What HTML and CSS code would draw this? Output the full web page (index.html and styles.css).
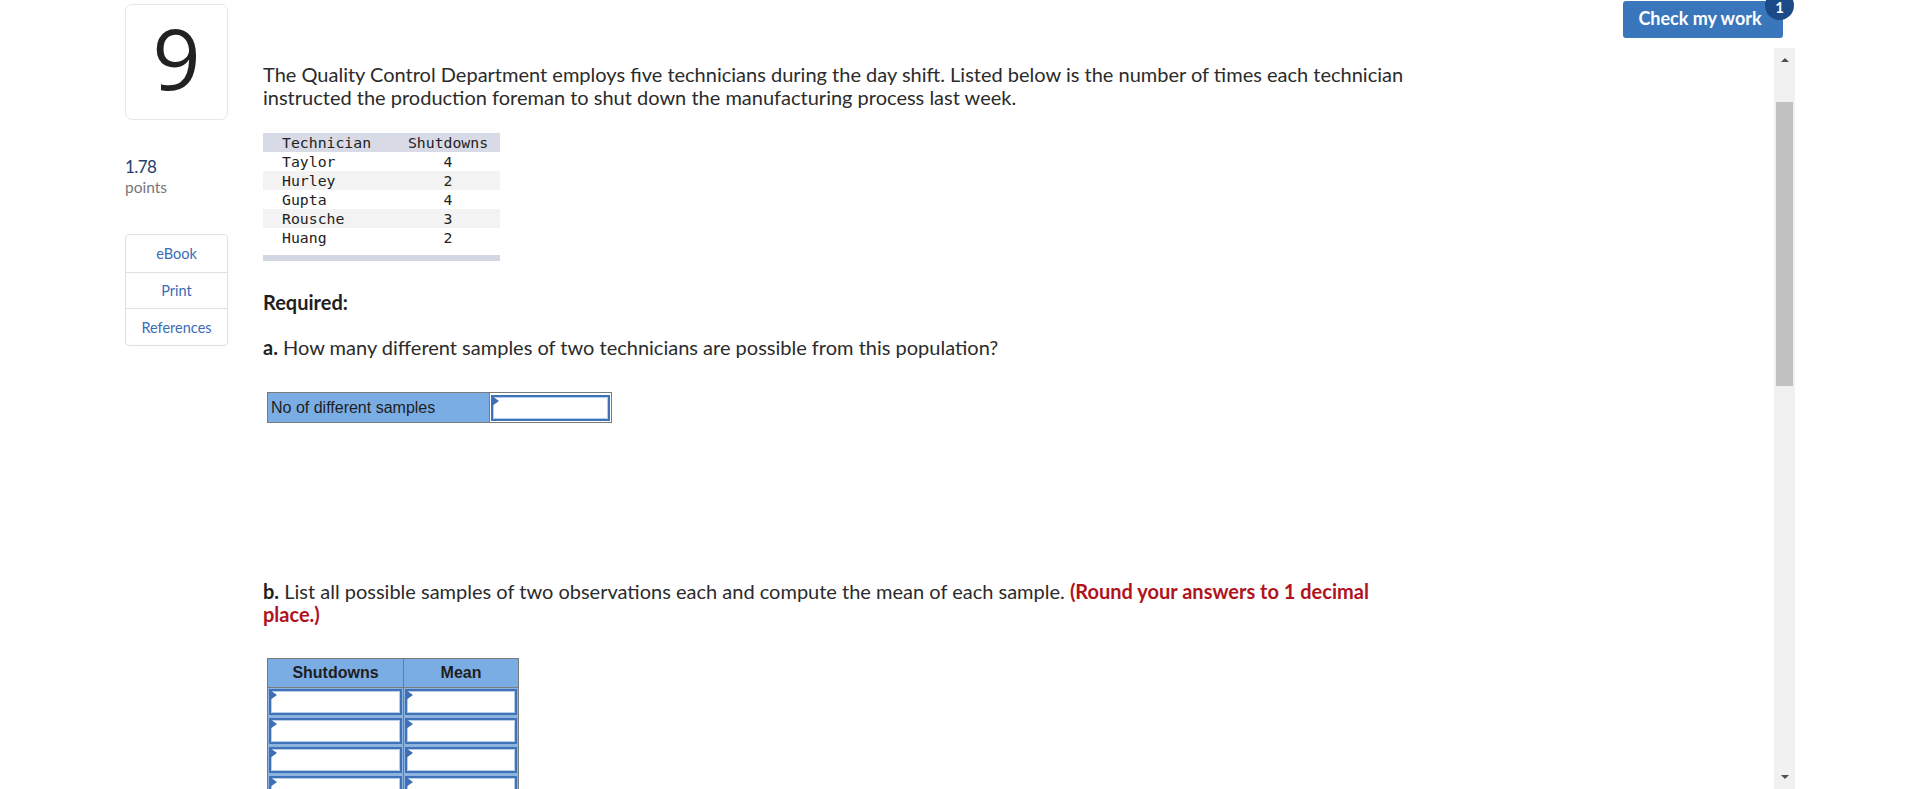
FILE: index.html
```html
<!DOCTYPE html>
<html lang="en">
<head>
<meta charset="utf-8">
<title>Question 9</title>
<link rel="stylesheet" href="styles.css">
</head>
<body>
<div class="page">
  <aside class="side">
    <div class="qnum">9</div>
    <div class="points">
      <div class="score">1.78</div>
      <div class="plabel">points</div>
    </div>
    <div class="tools">
      <div class="tool tool-ebook">eBook</div>
      <div class="tool tool-print">Print</div>
      <div class="tool tool-refs">References</div>
    </div>
  </aside>

  <main class="main">
    <p class="intro">The Quality Control Department employs five technicians during the day shift. Listed below is the number of times each technician instructed the production foreman to shut down the manufacturing process last week.</p>

    <table class="data">
      <thead>
        <tr><th class="c1">Technician</th><th class="c2">Shutdowns</th></tr>
      </thead>
      <tbody>
        <tr><td class="c1">Taylor</td><td class="c2">4</td></tr>
        <tr class="alt"><td class="c1">Hurley</td><td class="c2">2</td></tr>
        <tr><td class="c1">Gupta</td><td class="c2">4</td></tr>
        <tr class="alt"><td class="c1">Rousche</td><td class="c2">3</td></tr>
        <tr><td class="c1">Huang</td><td class="c2">2</td></tr>
      </tbody>
    </table>
    <div class="data-foot"></div>

    <h3 class="required">Required:</h3>

    <p class="q qa"><b>a.</b> How many different samples of two technicians are possible from this population?</p>

    <table class="ans-a">
      <tr>
        <td class="lbl">No of different samples</td>
        <td class="inp"><span class="box"><span class="flag"></span></span></td>
      </tr>
    </table>

    <p class="q qb"><b>b.</b> List all possible samples of two observations each and compute the mean of each sample. <strong class="warn">(Round your answers to 1 decimal place.)</strong></p>

    <table class="ans-b">
      <thead>
        <tr><th class="bc1">Shutdowns</th><th class="bc2">Mean</th></tr>
      </thead>
      <tbody>
        <tr><td><span class="box"><span class="flag"></span></span></td><td><span class="box"><span class="flag"></span></span></td></tr>
        <tr><td><span class="box"><span class="flag"></span></span></td><td><span class="box"><span class="flag"></span></span></td></tr>
        <tr><td><span class="box"><span class="flag"></span></span></td><td><span class="box"><span class="flag"></span></span></td></tr>
        <tr><td><span class="box"><span class="flag"></span></span></td><td><span class="box"><span class="flag"></span></span></td></tr>
      </tbody>
    </table>
  </main>

  <div class="right">
    <button class="check">Check my work<span class="badge">1</span></button>
    <div class="scrollbar">
      <span class="arrow up"></span>
      <div class="track"><div class="thumb"></div></div>
      <span class="arrow down"></span>
    </div>
  </div>
</div>
</body>
</html>
```

FILE: styles.css
```css
* { box-sizing: border-box; }
html, body {
  margin: 0;
  padding: 0;
  height: 789px;
  overflow: hidden;
  background: #fff;
}
body {
  font-family: Lato, "Open Sans", Arial, sans-serif;
  color: #2b2b2b;
}
.page {
  display: flex;
  align-items: flex-start;
  height: 789px;
  overflow: hidden;
}

/* left column */
.side {
  flex: none;
  width: 103px;
  margin-left: 125px;
  padding-top: 4px;
  display: flex;
  flex-direction: column;
}
.qnum {
  height: 116px;
  border: 1px solid #e6e6e6;
  border-radius: 7px;
  display: flex;
  align-items: center;
  justify-content: center;
  font-family: "Open Sans", Lato, sans-serif;
  font-size: 84px;
  font-weight: 400;
  color: #222;
  line-height: 1;
  padding-bottom: 8px;
}
.points {
  margin-top: 36px;
}
.score {
  font-size: 17px;
  color: #1f3e6a;
  line-height: 21px;
  letter-spacing: -0.6px;
}
.plabel {
  font-size: 15.5px;
  color: #777;
  line-height: 21px;
}
.tools {
  margin-top: 36px;
  border: 1px solid #e0e0e0;
  border-radius: 4px;
}
.tool {
  text-align: center;
  font-size: 14.5px;
  color: #3a6cb6;
  display: flex;
  align-items: center;
  justify-content: center;
}
.tool-ebook { height: 38px; border-bottom: 1px solid #e0e0e0; }
.tool-print { height: 36px; border-bottom: 1px solid #e0e0e0; }
.tool-refs { height: 36px; }

/* main */
.main {
  flex: none;
  width: 1150px;
  margin-left: 35px;
}
.intro {
  margin: 63px 0 0;
  font-size: 20px;
  line-height: 23px;
  color: #2b2b2b;
}
.data {
  margin-top: 24px;
  border-collapse: collapse;
  table-layout: fixed;
  width: 237px;
  font-family: "DejaVu Sans Mono", monospace;
  font-size: 14.8px;
  color: #222;
}
.data th, .data td {
  height: 19px;
  padding: 0;
  font-weight: normal;
  line-height: 19px;
}
.data thead tr { background: #d8dbe5; }
.data tr.alt { background: #f3f3f3; }
.data .c1 { width: 133px; text-align: left; padding-left: 19px; }
.data .c2 { width: 104px; text-align: center; }
.data-foot {
  width: 237px;
  height: 6px;
  margin-top: 8px;
  background: #d3d7e2;
}
.required {
  margin: 30px 0 0;
  font-size: 20px;
  font-weight: 700;
  line-height: 23px;
  color: #1f1f1f;
}
.q {
  margin: 0;
  font-size: 20px;
  line-height: 23px;
  color: #2b2b2b;
}
.q b { font-weight: 700; color: #1f1f1f; }
.qa { margin-top: 22px; }
.warn { color: #b0131c; font-weight: 700; }

.ans-a {
  margin: 33px 0 0 4px;
  border-collapse: collapse;
  border: 1px solid #7a7a7a;
  width: 345px;
  font-family: "Liberation Sans", Arial, sans-serif;
}
.ans-a td { padding: 0; height: 30px; }
.ans-a .lbl {
  width: 222px;
  background: #7badE5;
  font-size: 16px;
  color: #1e1e1e;
  padding-left: 3px;
  border-right: 1px solid #7a7a7a;
}
.ans-a .inp { background: #fff; padding: 1px; }

.box {
  position: relative;
  display: block;
  height: 26px;
  background: #fff;
  border: 2px solid #3f73b7;
  box-shadow: inset 0 0 0 1px #b6cdeb;
}
.flag {
  position: absolute;
  left: -1px;
  top: -1px;
  width: 0;
  height: 0;
  border-top: 5px solid transparent;
  border-bottom: 5px solid transparent;
  border-left: 7px solid #3c6fb5;
}

.qb { margin-top: 157px; }

.ans-b {
  margin: 32px 0 0 4px;
  border-collapse: collapse;
  width: 252px;
  border: 1px solid #7a7a7a;
  font-family: "Liberation Sans", Arial, sans-serif;
}
.ans-b th {
  height: 29px;
  background: #7badE5;
  font-size: 16px;
  font-weight: 700;
  color: #1e1e1e;
  padding: 0;
  border: 1px solid #7a7a7a;
}
.bc1 { width: 136px; }
.ans-b td {
  padding: 1px;
  height: 29px;
  background: #8fb3df;
  border-right: 1px solid #7a7a7a;
}

/* right column */
.right {
  flex: none;
  margin-left: auto;
  margin-right: 112px;
  width: 172px;
  display: flex;
  flex-direction: column;
  align-items: flex-start;
}
.check {
  position: relative;
  margin-top: 1px;
  width: 160px;
  height: 37px;
  border: none;
  border-radius: 3px;
  background: #3a76bb;
  color: #fff;
  font-family: Lato, "Open Sans", sans-serif;
  font-weight: 700;
  font-size: 18px;
  padding: 0 6px 4px 0;
  text-align: center;
}
.badge {
  position: absolute;
  right: -11px;
  top: -10px;
  width: 29px;
  height: 29px;
  border-radius: 50%;
  background: #1c4a86;
  color: #fff;
  font-size: 15px;
  font-weight: 700;
  line-height: 32px;
  text-align: center;
}
.scrollbar {
  align-self: flex-end;
  margin-top: 10px;
  width: 21px;
  height: 741px;
  background: #f1f1f1;
  display: flex;
  flex-direction: column;
  align-items: center;
}
.arrow {
  width: 0;
  height: 0;
  border-left: 4px solid transparent;
  border-right: 4px solid transparent;
}
.arrow.up {
  margin-top: 10px;
  border-bottom: 4px solid #505050;
}
.arrow.down {
  margin-top: auto;
  margin-bottom: 10px;
  border-top: 4px solid #505050;
}
.track {
  width: 100%;
  padding: 0 2px;
  margin-top: 40px;
}
.thumb {
  height: 284px;
  background: #c1c1c1;
}
```
